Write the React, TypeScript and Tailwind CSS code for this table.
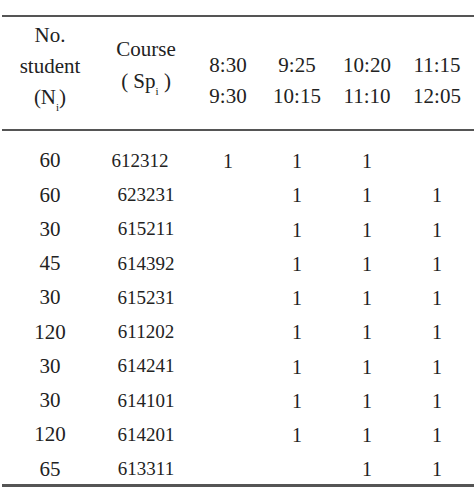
import React from 'react';

const rows = [
  { n: '60', course: '612312', marks: [1, 1, 1, 0], shift: true },
  { n: '60', course: '623231', marks: [0, 1, 1, 1] },
  { n: '30', course: '615211', marks: [0, 1, 1, 1] },
  { n: '45', course: '614392', marks: [0, 1, 1, 1] },
  { n: '30', course: '615231', marks: [0, 1, 1, 1] },
  { n: '120', course: '611202', marks: [0, 1, 1, 1] },
  { n: '30', course: '614241', marks: [0, 1, 1, 1] },
  { n: '30', course: '614101', marks: [0, 1, 1, 1] },
  { n: '120', course: '614201', marks: [0, 1, 1, 1] },
  { n: '65', course: '613311', marks: [0, 0, 1, 1] },
];

const times = [
  ['8:30', '9:30'],
  ['9:25', '10:15'],
  ['10:20', '11:10'],
  ['11:15', '12:05'],
];

const cols = 'grid grid-cols-[100px_92px_72px_66px_74px_66px]';

const Sub = () => (
  <span className="relative top-[7px] text-[11px] leading-none">i</span>
);

export default function App() {
  return (
    <div className="w-[474px] h-[487px] bg-white text-[#222] [font-family:Liberation_Serif,serif] pt-[15px]">
      <div className="ml-[2px] border-t-2 border-[#555]" />

      {/* header */}
      <div className={`${cols} h-[112px] text-[21px] leading-[31px]`}>
        <div className="flex flex-col items-center pt-[3px]">
          <span>No.</span>
          <span>student</span>
          <span>
            (N<Sub />)
          </span>
        </div>
        <div className="flex flex-col items-center pt-[16px] leading-[32px]">
          <span>Course</span>
          <span className="whitespace-pre">
            ( Sp<Sub /> )
          </span>
        </div>
        {times.map((t) => (
          <div key={t[0]} className="flex flex-col items-center pt-[33px]">
            <span>{t[0]}</span>
            <span>{t[1]}</span>
          </div>
        ))}
      </div>

      <div className="ml-[2px] border-t-2 border-[#555]" />

      {/* body */}
      <div className="pt-[13px]">
        {rows.map((r, i) => (
          <div key={i} className={`${cols} h-[34.25px] items-center`}>
            <div className="text-center text-[21px]">{r.n}</div>
            <div className={`text-center text-[19px] ${r.shift ? 'pr-[12px]' : ''}`}>
              {r.course}
            </div>
            {r.marks.map((m, j) => (
              <div key={j} className="text-center text-[20px]">
                {m ? '1' : ''}
              </div>
            ))}
          </div>
        ))}
      </div>

      <div className="ml-[2px] mt-[-3px] border-t-[3px] border-[#555]" />
    </div>
  );
}
